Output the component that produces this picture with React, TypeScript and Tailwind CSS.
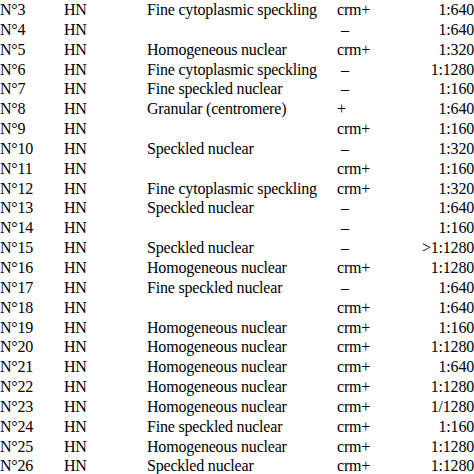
const rows: [string, string, string, string][] = [
  ["3", "Fine cytoplasmic speckling", "crm+", "1:640"],
  ["4", "", "–", "1:640"],
  ["5", "Homogeneous nuclear", "crm+", "1:320"],
  ["6", "Fine cytoplasmic speckling", "–", "1:1280"],
  ["7", "Fine speckled nuclear", "–", "1:160"],
  ["8", "Granular (centromere)", "+", "1:640"],
  ["9", "", "crm+", "1:160"],
  ["10", "Speckled nuclear", "–", "1:320"],
  ["11", "", "crm+", "1:160"],
  ["12", "Fine cytoplasmic speckling", "crm+", "1:320"],
  ["13", "Speckled nuclear", "–", "1:640"],
  ["14", "", "–", "1:160"],
  ["15", "Speckled nuclear", "–", ">1:1280"],
  ["16", "Homogeneous nuclear", "crm+", "1:1280"],
  ["17", "Fine speckled nuclear", "–", "1:640"],
  ["18", "", "crm+", "1:640"],
  ["19", "Homogeneous nuclear", "crm+", "1:160"],
  ["20", "Homogeneous nuclear", "crm+", "1:1280"],
  ["21", "Homogeneous nuclear", "crm+", "1:640"],
  ["22", "Homogeneous nuclear", "crm+", "1:1280"],
  ["23", "Homogeneous nuclear", "crm+", "1/1280"],
  ["24", "Fine speckled nuclear", "crm+", "1:160"],
  ["25", "Homogeneous nuclear", "crm+", "1:1280"],
  ["26", "Speckled nuclear", "crm+", "1:1280"],
];

export default function App() {
  return (
    <div className="h-[474px] w-[474px] overflow-hidden bg-white">
      <div className="w-[474px] font-['Liberation_Serif','Times_New_Roman',serif] text-[16px] leading-[19.85px] tracking-[-0.2px] text-black">
        {rows.map(([n, pattern, crm, titre]) => (
          <div key={n} className="grid grid-cols-[64px_83px_190px_1fr] whitespace-nowrap">
            <div>N°{n}</div>
            <div>HN</div>
            <div>{pattern}</div>
            <div className="flex">
              <span className={crm === "–" ? "pl-[4px]" : ""}>{crm}</span>
              <span className="ml-auto">{titre}</span>
            </div>
          </div>
        ))}
      </div>
    </div>
  );
}
